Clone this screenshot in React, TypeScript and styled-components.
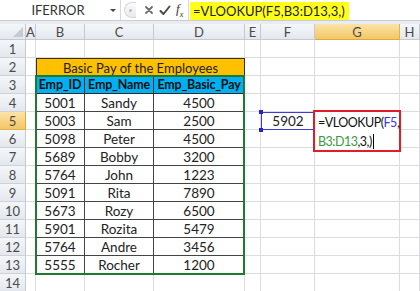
import { createGlobalStyle, styled } from "styled-components"

const GlobalStyle = createGlobalStyle`
  html, body { margin: 0; padding: 0; background: #ffffff; }
  body { font-family: Lato, "Liberation Sans", sans-serif; }
  * { box-sizing: border-box; }
`

const COLS = ["A", "B", "C", "D", "E", "F", "G", "H"]
const COL_WIDTHS = "26px 10px 49px 69px 91px 16px 54px 85px 1fr"

const employees = [
  ["5001", "Sandy", "4500"],
  ["5003", "Sam", "2500"],
  ["5098", "Peter", "4500"],
  ["5689", "Bobby", "3200"],
  ["5764", "John", "1223"],
  ["5091", "Rita", "7890"],
  ["5673", "Rozy", "6500"],
  ["5901", "Rozita", "5479"],
  ["5764", "Andre", "3456"],
  ["5555", "Rocher", "1200"],
]

type Kind = "plain" | "title" | "head" | "data" | "ref"
type CellDef = { col: number; span?: number; kind: Kind; text?: string }

// works out what sits in each cell of a sheet row
const cellsFor = (row: number) => {
  const out: CellDef[] = []
  COLS.forEach((_, i) => {
    const col = i + 2
    if (row === 2 && col >= 3 && col <= 5) {
      if (col === 3) out.push({ col, span: 3, kind: "title", text: "Basic Pay of the Employees" })
      return
    }
    if (row === 3 && col >= 3 && col <= 5) {
      out.push({ col, kind: "head", text: ["Emp_ID", "Emp_Name", "Emp_Basic_Pay"][col - 3] })
      return
    }
    if (row >= 4 && row <= 13 && col >= 3 && col <= 5) {
      out.push({ col, kind: "data", text: employees[row - 4][col - 3] })
      return
    }
    if (row === 5 && col === 7) {
      out.push({ col, kind: "ref", text: "5902" })
      return
    }
    out.push({ col, kind: "plain" })
  })
  return out
}

const App = () => {
  const rows = Array.from({ length: 14 }, (_, i) => i + 1)

  return (
    <>
      <GlobalStyle />
      <Window>
        <FormulaBar>
          <NameBox>
            <NameText>IFERROR</NameText>
            <DropArrow />
          </NameBox>
          <Grip>
            <GripDot />
          </Grip>
          <BarIcons>
            <svg width="10" height="10" viewBox="0 0 10 10">
              <path d="M2 2 L8 8 M8 2 L2 8" stroke="#6b6b6b" strokeWidth="1.8" strokeLinecap="round" />
            </svg>
            <svg width="12" height="11" viewBox="0 0 12 11">
              <path d="M1.5 6 L4.5 9 L10.5 1.5" stroke="#4a4a4a" strokeWidth="2" fill="none" strokeLinecap="round" strokeLinejoin="round" />
            </svg>
            <Fx>
              f<sub>x</sub>
            </Fx>
          </BarIcons>
          <FormulaInput>
            <Highlight>=VLOOKUP(F5,B3:D13,3,)</Highlight>
          </FormulaInput>
        </FormulaBar>

        <Sheet>
          <Corner>
            <svg width="10" height="10" viewBox="0 0 10 10">
              <path d="M10 0 L10 10 L0 10 Z" fill="#c6cbd2" />
            </svg>
          </Corner>
          {COLS.map((c) => (
            <ColHead key={c} $active={c === "G"}>
              {c}
            </ColHead>
          ))}

          {rows.map((r) => (
            <RowGroup key={r} r={r} cells={cellsFor(r)} />
          ))}

          <RangeBox />
          <EditBox>
            <span>=VLOOKUP(</span>
            <RefBlue>F5</RefBlue>
            <span>,</span>
            <br />
            <RefGreen>B3:D13</RefGreen>
            <span>,3,)</span>
            <Caret />
          </EditBox>
        </Sheet>
      </Window>
    </>
  )
}

const RowGroup = ({ r, cells }: { r: number; cells: CellDef[] }) => (
  <>
    <RowHead $row={r} $active={r === 5}>
      {r}
    </RowHead>
    {cells.map((c) => {
      const props = { $row: r, $col: c.col, $span: c.span ?? 1 }
      if (c.kind === "title") return <TitleCell key={c.col} {...props}>{c.text}</TitleCell>
      if (c.kind === "head") return <HeadCell key={c.col} {...props}>{c.text}</HeadCell>
      if (c.kind === "data") return <DataCell key={c.col} {...props}>{c.text}</DataCell>
      if (c.kind === "ref")
        return (
          <RefCell key={c.col} {...props}>
            {c.text}
            <Handle $x="left" $y="top" />
            <Handle $x="right" $y="top" />
            <Handle $x="left" $y="bottom" />
            <Handle $x="right" $y="bottom" />
          </RefCell>
        )
      return <Cell key={c.col} {...props} />
    })}
  </>
)

export default App

const Window = styled.div`
  width: 420px;
  height: 291px;
  overflow: hidden;
  display: flex;
  flex-direction: column;
  background: #e9ecf0;
`

const FormulaBar = styled.div`
  height: 21px;
  display: flex;
  align-items: stretch;
  background: #ffffff;
  border-bottom: 1px solid #c9ced6;
  margin-bottom: 3px;
`

const NameBox = styled.div`
  width: 121px;
  display: flex;
  align-items: center;
  padding: 0 4px 0 0;
  border-right: 1px solid #d6dae0;
`

const NameText = styled.span`
  flex: 1;
  text-align: center;
  font-size: 13px;
  color: #333;
  padding-left: 6px;
`

const DropArrow = styled.span`
  width: 0;
  height: 0;
  border-left: 3px solid transparent;
  border-right: 3px solid transparent;
  border-top: 3px solid #444;
`

const Grip = styled.div`
  width: 12px;
  margin: 2px 0 2px 3px;
  border: 1px solid #d3d7dd;
  border-right: none;
  border-radius: 9px 0 0 9px;
  background: linear-gradient(#fbfbfc, #e7eaee);
  display: flex;
  align-items: center;
  justify-content: center;
`

const GripDot = styled.span`
  width: 3px;
  height: 3px;
  border-radius: 50%;
  background: #b5bbc4;
`

const BarIcons = styled.div`
  width: 52px;
  display: flex;
  align-items: center;
  gap: 5px;
  padding: 0 0 0 8px;
`

const Fx = styled.span`
  font-family: "Liberation Serif", serif;
  font-style: italic;
  font-size: 13px;
  color: #333;
  sub {
    font-size: 8px;
  }
`

const FormulaInput = styled.div`
  flex: 1;
  display: flex;
  align-items: stretch;
  padding: 2px 0 0 1px;
  border-left: 1px solid #d6dae0;
`

const Highlight = styled.span`
  background: #ffff1a;
  font-size: 13px;
  color: #222;
  padding: 1px 4px 0 3px;
  line-height: 17px;
`

const Sheet = styled.div`
  flex: 1;
  display: grid;
  grid-template-columns: ${COL_WIDTHS};
  grid-template-rows: 16px repeat(14, 18px);
  background: #ffffff;
  font-size: 13.5px;
  color: #111;
`

const headBg = "linear-gradient(#f4f6f9, #e4e8ee)"
const activeBg = "linear-gradient(#fbe3a8, #f2c766)"

const Corner = styled.div`
  background: ${headBg};
  border-right: 1px solid #c5cad2;
  border-bottom: 1px solid #c5cad2;
  display: flex;
  align-items: flex-end;
  justify-content: flex-end;
  padding: 0 2px 2px 0;
`

const ColHead = styled.div<{ $active?: boolean }>`
  background: ${(p) => (p.$active ? activeBg : headBg)};
  border-right: 1px solid ${(p) => (p.$active ? "#e2b24a" : "#c5cad2")};
  border-bottom: 1px solid ${(p) => (p.$active ? "#e2a93a" : "#c5cad2")};
  display: flex;
  align-items: center;
  justify-content: center;
  font-size: 13px;
  color: #4a4a4a;
`

const RowHead = styled.div<{ $row: number; $active?: boolean }>`
  grid-column: 1;
  grid-row: ${(p) => p.$row + 1};
  background: ${(p) => (p.$active ? activeBg : headBg)};
  border-right: 1px solid ${(p) => (p.$active ? "#e2a93a" : "#c5cad2")};
  border-bottom: 1px solid ${(p) => (p.$active ? "#e2b24a" : "#cdd2d9")};
  display: flex;
  align-items: center;
  justify-content: center;
  font-size: 13px;
  color: #4a4a4a;
`

type Pos = { $row: number; $col: number; $span: number }

const Cell = styled.div<Pos>`
  grid-row: ${(p) => p.$row + 1};
  grid-column: ${(p) => p.$col} / span ${(p) => p.$span};
  border-right: 1px solid #dadcdf;
  border-bottom: 1px solid #dadcdf;
  display: flex;
  align-items: center;
  justify-content: center;
  white-space: nowrap;
  overflow: hidden;
`

const TitleCell = styled(Cell)`
  background: #ffc000;
  border: 1px solid #3a3000;
  border-bottom: none;
  color: #222;
  font-size: 13px;
`

const HeadCell = styled(Cell)`
  background: #00b0f0;
  border-right: 1px solid #2b2b2b;
  border-bottom: 1px solid #2b2b2b;
  font-weight: 700;
  font-size: 12.5px;
  letter-spacing: -0.2px;
  color: #111;
`

const DataCell = styled(Cell)`
  border-right: 1px solid #444;
  border-bottom: 1px solid #444;
  color: #222;
`

const RefCell = styled(Cell)`
  position: relative;
  overflow: visible;
  border: 1px solid #3c3cd8;
  color: #222;
`

const Handle = styled.span<{ $x: "left" | "right"; $y: "top" | "bottom" }>`
  position: absolute;
  width: 4px;
  height: 4px;
  background: #2323c8;
  ${(p) => p.$x}: -3px;
  ${(p) => p.$y}: -3px;
`

const RangeBox = styled.div`
  grid-row: 4 / 15;
  grid-column: 3 / 6;
  border: 2px solid #1e7a2c;
  margin: -1px 0 -1px -1px;
  pointer-events: none;
`

const EditBox = styled.div`
  grid-row: 6 / 8;
  grid-column: 8;
  margin: -2px -1px -4px -2px;
  border: 2px solid #e01c26;
  background: #ffffff;
  padding: 1px 0 0 3px;
  line-height: 19px;
  font-size: 12.5px;
  letter-spacing: -0.5px;
  color: #111;
  white-space: nowrap;
  z-index: 2;
`

const RefBlue = styled.span`
  color: #3b3bd0;
`

const RefGreen = styled.span`
  color: #3b9a3b;
`

const Caret = styled.span`
  display: inline-block;
  width: 1px;
  height: 15px;
  background: #000;
  vertical-align: -3px;
  margin-left: 1px;
`
